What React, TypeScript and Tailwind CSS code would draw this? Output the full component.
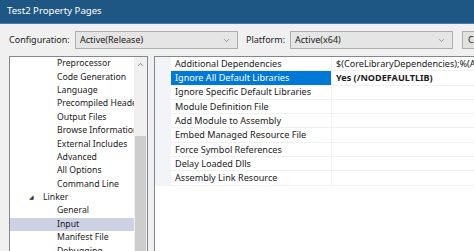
import { ChevronDown, ChevronUp } from "lucide-react";

const treeItems = [
  { label: "Preprocessor", level: 2 },
  { label: "Code Generation", level: 2 },
  { label: "Language", level: 2 },
  { label: "Precompiled Headers", level: 2 },
  { label: "Output Files", level: 2 },
  { label: "Browse Information", level: 2 },
  { label: "External Includes", level: 2 },
  { label: "Advanced", level: 2 },
  { label: "All Options", level: 2 },
  { label: "Command Line", level: 2 },
  { label: "Linker", level: 1, open: true },
  { label: "General", level: 2 },
  { label: "Input", level: 2, selected: true },
  { label: "Manifest File", level: 2 },
  { label: "Debugging", level: 2 },
];

const props = [
  { name: "Additional Dependencies", value: "$(CoreLibraryDependencies);%(AdditionalDependencies)" },
  { name: "Ignore All Default Libraries", value: "Yes (/NODEFAULTLIB)", selected: true },
  { name: "Ignore Specific Default Libraries", value: "" },
  { name: "Module Definition File", value: "" },
  { name: "Add Module to Assembly", value: "" },
  { name: "Embed Managed Resource File", value: "" },
  { name: "Force Symbol References", value: "" },
  { name: "Delay Loaded Dlls", value: "" },
  { name: "Assembly Link Resource", value: "" },
];

function Combo({ text, width }: { text: string; width: string }) {
  return (
    <div className={`${width} shrink-0 h-[18px] flex items-center justify-between bg-[#e5e5e5] border border-[#adadad] pl-[4px] pr-[6px]`}>
      <span>{text}</span>
      <ChevronDown size={9} strokeWidth={1.5} className="text-[#606060]" />
    </div>
  );
}

export default function App() {
  return (
    <div
      className="w-[474px] h-[251px] overflow-hidden bg-[#f0f0f0] text-[9px] text-[#1a1a1a] flex flex-col"
      style={{ fontFamily: '"Noto Sans", "Open Sans", sans-serif' }}
    >
      {/* title bar */}
      <div className="h-[24px] shrink-0 bg-[#1f5784] border-b border-[#4f7ca3] flex items-center pl-[7px] text-white text-[9.6px]">
        Test2 Property Pages
      </div>

      {/* configuration row */}
      <div className="h-[18px] mt-[7px] flex items-center whitespace-nowrap overflow-hidden">
        <span className="ml-[9px] w-[66px] shrink-0">Configuration:</span>
        <Combo text="Active(Release)" width="w-[163px]" />
        <span className="ml-[8px] w-[44px] shrink-0">Platform:</span>
        <Combo text="Active(x64)" width="w-[163px]" />
        <div className="ml-[9px] h-[18px] w-[80px] shrink-0 bg-[#e1e1e1] border border-[#adadad] pl-[5px] flex items-center">
          Configuration Manager...
        </div>
      </div>

      {/* panels */}
      <div className="flex-1 flex mt-[7px] pl-[9px] min-h-0">
        {/* tree */}
        <div className="w-[139px] shrink-0 bg-white border border-[#828790] border-b-0 flex overflow-hidden">
          <div className="flex-1 min-w-0 text-[8.7px]">
            {treeItems.map(t => (
              <div
                key={t.label}
                className={`h-[13.4px] flex items-center whitespace-nowrap overflow-hidden ${t.selected ? "bg-[#cdd1e4]" : ""}`}
              >
                {t.level === 1 ? (
                  <>
                    <span className="ml-[19px] w-[14px] text-[6px] text-[#333]">◢</span>
                    <span>{t.label}</span>
                  </>
                ) : (
                  <span className="ml-[47px]">{t.label}</span>
                )}
              </div>
            ))}
          </div>
          <div className="w-[13px] shrink-0 bg-[#f0f0f0] flex flex-col items-center">
            <ChevronUp size={9} strokeWidth={2} className="mt-[3px] text-[#606060]" />
            <div className="mt-[67px] w-[11px] flex-1 bg-[#cdcdcd]" />
          </div>
        </div>

        {/* property grid */}
        <div className="ml-[6px] flex-1 bg-white border border-[#828790] border-r-0 border-b-0 flex">
          <div className="w-[16px] shrink-0 h-[129px] bg-[#f2f4f7]" />
          <div className="flex-1 min-w-0 text-[9.1px]">
            {props.map(p => (
              <div key={p.name} className="h-[14.3px] flex border-b border-[#f0f0f0] whitespace-nowrap">
                <div
                  className={`w-[161px] shrink-0 flex items-center pl-[4px] border-r border-[#f0f0f0] ${p.selected ? "bg-[#0078d7] text-white" : ""}`}
                >
                  {p.name}
                </div>
                <div className={`flex-1 overflow-hidden flex items-center pl-[4px] ${p.selected ? "font-bold" : ""}`}>
                  {p.value}
                </div>
              </div>
            ))}
          </div>
        </div>
      </div>
    </div>
  );
}
